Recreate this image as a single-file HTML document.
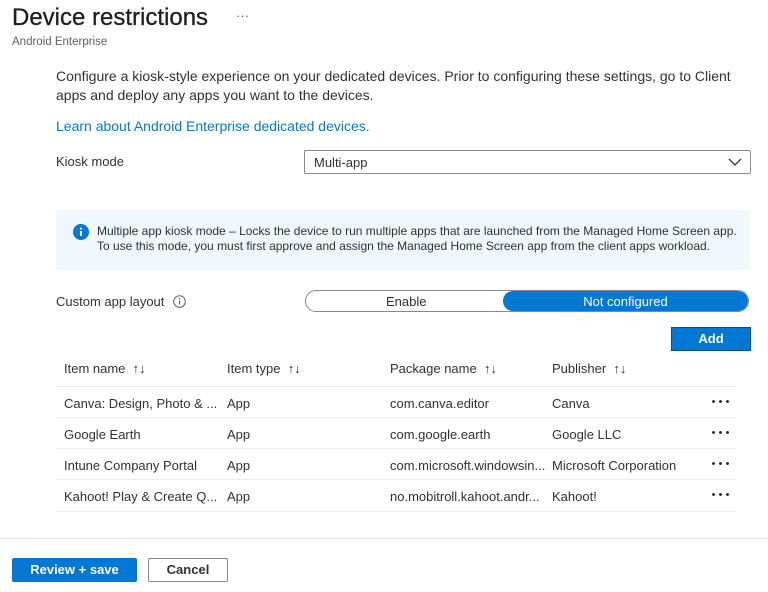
<!DOCTYPE html>
<html><head><style>
*{box-sizing:border-box;margin:0;padding:0}
body{width:768px;height:592px;background:#fff;font-family:"Liberation Sans",sans-serif;color:#323130;position:relative;overflow:hidden;font-size:13px}
.a{position:absolute;white-space:nowrap}
.row{position:absolute;left:56px;width:680px;height:31px;border-bottom:1px solid #edebe9}
.row span{position:absolute;top:9px;font-size:13px}
.row .d{left:656px;top:13px;width:18px;height:3px;background:radial-gradient(circle at 1.5px 1.5px,#323130 1.3px,transparent 1.6px) 0 0/7px 3px repeat-x}
</style></head><body>
<div class="a" style="left:12px;top:4px;font-size:24px;color:#201f1e;-webkit-text-stroke:0.3px #201f1e">Device restrictions</div>
<div class="a" style="left:236px;top:8px;font-size:13px;color:#605e5c">···</div>
<div class="a" style="left:12px;top:36px;font-size:11.5px;color:#605e5c">Android Enterprise</div>
<div class="a" style="left:56px;top:67px;font-size:14px;line-height:19px;color:#323130">Configure a kiosk-style experience on your dedicated devices. Prior to configuring these settings, go to Client<br>apps and deploy any apps you want to the devices.</div>
<div class="a" style="left:56px;top:118px;font-size:14px;color:#0078d4">Learn about Android Enterprise dedicated devices.</div>
<div class="a" style="left:56px;top:154px;font-size:13px">Kiosk mode</div>
<div class="a" style="left:304px;top:150px;width:447px;height:24px;border:1px solid #8a8886;border-radius:2px"><span style="position:absolute;left:9px;top:4px;font-size:13px">Multi-app</span>
<svg style="position:absolute;right:8px;top:6px" width="14" height="10"><path d="M1 2l6 6 6-6" fill="none" stroke="#323130" stroke-width="1.3"/></svg></div>
<div class="a" style="left:56px;top:210px;width:694px;height:60px;background:#eff6fc"></div>
<svg class="a" style="left:73px;top:224px" width="16" height="16"><circle cx="8" cy="8" r="8" fill="#0078d4"/><rect x="7" y="7" width="2" height="5" fill="#fff"/><circle cx="8" cy="4.6" r="1.1" fill="#fff"/></svg>
<div class="a" style="left:97px;top:224px;font-size:12px;line-height:15px">Multiple app kiosk mode – Locks the device to run multiple apps that are launched from the Managed Home Screen app.<br>To use this mode, you must first approve and assign the Managed Home Screen app from the client apps workload.</div>
<div class="a" style="left:56px;top:294px;font-size:13px">Custom app layout</div>
<svg class="a" style="left:173px;top:295px" width="13" height="13"><circle cx="6.5" cy="6.5" r="5.8" fill="none" stroke="#605e5c"/><rect x="6" y="5.5" width="1" height="4" fill="#605e5c"/><circle cx="6.5" cy="3.8" r=".7" fill="#605e5c"/></svg>
<div class="a" style="left:305px;top:290px;width:444px;height:22px;border:1px solid #8a8886;border-radius:11px;overflow:hidden">
<span style="position:absolute;left:80px;top:3px;font-size:13px">Enable</span>
<div style="position:absolute;left:197px;top:0;right:0;bottom:0;background:#0078d4;border-radius:11px;color:#fff;text-align:center;font-size:13px;padding-top:3px">Not configured</div></div>
<div class="a" style="left:671px;top:327px;width:80px;height:24px;background:#0078d4;border:1px solid #004e8c;color:#fff;font-weight:bold;font-size:13px;text-align:center;line-height:22px">Add</div>
<div class="row" style="top:355px;height:32px"><span style="left:8px;top:6px">Item name &nbsp;↑↓</span><span style="left:171px;top:6px">Item type &nbsp;↑↓</span><span style="left:334px;top:6px">Package name &nbsp;↑↓</span><span style="left:496px;top:6px">Publisher &nbsp;↑↓</span></div>
<div class="row" style="top:387px"><span style="left:8px">Canva: Design, Photo &amp; ...</span><span style="left:171px">App</span><span style="left:334px">com.canva.editor</span><span style="left:496px">Canva</span><span class="d"></span></div>
<div class="row" style="top:418px"><span style="left:8px">Google Earth</span><span style="left:171px">App</span><span style="left:334px">com.google.earth</span><span style="left:496px">Google LLC</span><span class="d"></span></div>
<div class="row" style="top:449px"><span style="left:8px">Intune Company Portal</span><span style="left:171px">App</span><span style="left:334px">com.microsoft.windowsin...</span><span style="left:496px">Microsoft Corporation</span><span class="d"></span></div>
<div class="row" style="top:480px;height:32px"><span style="left:8px">Kahoot! Play &amp; Create Q...</span><span style="left:171px">App</span><span style="left:334px">no.mobitroll.kahoot.andr...</span><span style="left:496px">Kahoot!</span><span class="d"></span></div>
<div class="a" style="left:0;top:538px;width:768px;height:1px;background:#e1dfdd"></div>
<div class="a" style="left:12px;top:558px;width:125px;height:24px;background:#0078d4;border-radius:2px;color:#fff;font-weight:bold;font-size:13px;text-align:center;line-height:24px">Review + save</div>
<div class="a" style="left:148px;top:558px;width:80px;height:24px;border:1px solid #8a8886;border-radius:2px;font-weight:bold;font-size:13px;text-align:center;line-height:22px">Cancel</div>
</body></html>
